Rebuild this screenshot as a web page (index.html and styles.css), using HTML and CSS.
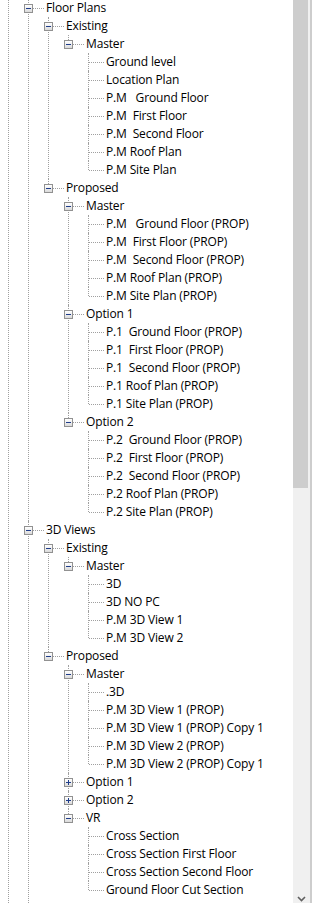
FILE: index.html
```html
<!DOCTYPE html>
<html lang="en">
<head>
  <meta charset="UTF-8">
  <meta name="viewport" content="width=device-width, initial-scale=1.0">
  <title>Project Browser</title>
  <link rel="stylesheet" href="styles.css">
</head>
<body>

  <div class="panel">
    <div class="tree">
      <div class="guide">
        <ul class="root">

          <li>
            <div class="row"><span class="toggle"></span>Floor Plans</div>
            <ul>
              <li>
                <div class="row"><span class="toggle"></span>Existing</div>
                <ul>
                  <li>
                    <div class="row"><span class="toggle"></span>Master</div>
                    <ul>
                      <li><div class="row">Ground level</div></li>
                      <li><div class="row">Location Plan</div></li>
                      <li><div class="row">P.M   Ground Floor</div></li>
                      <li><div class="row">P.M  First Floor</div></li>
                      <li><div class="row">P.M  Second Floor</div></li>
                      <li><div class="row">P.M Roof Plan</div></li>
                      <li><div class="row">P.M Site Plan</div></li>
                    </ul>
                  </li>
                </ul>
              </li>
              <li>
                <div class="row"><span class="toggle"></span>Proposed</div>
                <ul>
                  <li>
                    <div class="row"><span class="toggle"></span>Master</div>
                    <ul>
                      <li><div class="row">P.M   Ground Floor (PROP)</div></li>
                      <li><div class="row">P.M  First Floor (PROP)</div></li>
                      <li><div class="row">P.M  Second Floor (PROP)</div></li>
                      <li><div class="row">P.M Roof Plan (PROP)</div></li>
                      <li><div class="row">P.M Site Plan (PROP)</div></li>
                    </ul>
                  </li>
                  <li>
                    <div class="row"><span class="toggle"></span>Option 1</div>
                    <ul>
                      <li><div class="row">P.1  Ground Floor (PROP)</div></li>
                      <li><div class="row">P.1  First Floor (PROP)</div></li>
                      <li><div class="row">P.1  Second Floor (PROP)</div></li>
                      <li><div class="row">P.1 Roof Plan (PROP)</div></li>
                      <li><div class="row">P.1 Site Plan (PROP)</div></li>
                    </ul>
                  </li>
                  <li>
                    <div class="row"><span class="toggle"></span>Option 2</div>
                    <ul>
                      <li><div class="row">P.2  Ground Floor (PROP)</div></li>
                      <li><div class="row">P.2  First Floor (PROP)</div></li>
                      <li><div class="row">P.2  Second Floor (PROP)</div></li>
                      <li><div class="row">P.2 Roof Plan (PROP)</div></li>
                      <li><div class="row">P.2 Site Plan (PROP)</div></li>
                    </ul>
                  </li>
                </ul>
              </li>
            </ul>
          </li>

          <li>
            <div class="row"><span class="toggle"></span>3D Views</div>
            <ul>
              <li>
                <div class="row"><span class="toggle"></span>Existing</div>
                <ul>
                  <li>
                    <div class="row"><span class="toggle"></span>Master</div>
                    <ul>
                      <li><div class="row">3D</div></li>
                      <li><div class="row">3D NO PC</div></li>
                      <li><div class="row">P.M 3D View 1</div></li>
                      <li><div class="row">P.M 3D View 2</div></li>
                    </ul>
                  </li>
                </ul>
              </li>
              <li>
                <div class="row"><span class="toggle"></span>Proposed</div>
                <ul>
                  <li>
                    <div class="row"><span class="toggle"></span>Master</div>
                    <ul>
                      <li><div class="row">.3D</div></li>
                      <li><div class="row">P.M 3D View 1 (PROP)</div></li>
                      <li><div class="row">P.M 3D View 1 (PROP) Copy 1</div></li>
                      <li><div class="row">P.M 3D View 2 (PROP)</div></li>
                      <li><div class="row">P.M 3D View 2 (PROP) Copy 1</div></li>
                    </ul>
                  </li>
                  <li>
                    <div class="row"><span class="toggle plus"></span>Option 1</div>
                  </li>
                  <li>
                    <div class="row"><span class="toggle plus"></span>Option 2</div>
                  </li>
                  <li>
                    <div class="row"><span class="toggle"></span>VR</div>
                    <ul>
                      <li><div class="row">Cross Section</div></li>
                      <li><div class="row">Cross Section First Floor</div></li>
                      <li><div class="row">Cross Section Second Floor</div></li>
                      <li><div class="row">Ground Floor Cut Section</div></li>
                    </ul>
                  </li>
                </ul>
              </li>
            </ul>
          </li>

        </ul>
      </div>
    </div>

    <div class="scrollbar">
      <div class="thumb"></div>
      <svg class="arrow" width="9" height="6" viewBox="0 0 9 6">
        <path d="M1 1 L4.5 4.5 L8 1" fill="none" stroke="#606060" stroke-width="1.6"/>
      </svg>
    </div>
  </div>

</body>
</html>
```

FILE: styles.css
```css
body {
  margin: 0;
  font-family: 'Open Sans', 'Noto Sans', sans-serif;
  font-size: 12px;
  letter-spacing: -0.15px;
  color: #000;
  background-color: white;
}
.panel {
  display: flex;
  width: 312px;
  height: 903px;
  box-sizing: border-box;
  border-right: 2px solid #cdcdcd;
  overflow: hidden;
}
.tree {
  flex: 1;
  overflow: hidden;
  padding-left: 8px;
}
.guide {
  border-left: 1px dotted #a0a0a0;
  padding-left: 19px;
  margin-top: -1px;
  min-height: 910px;
}
ul {
  list-style: none;
  margin: 0;
  padding: 0;
}
ul ul {
  padding-left: 20px;
}
li {
  position: relative;
}
li::before {
  content: "";
  position: absolute;
  left: 0;
  top: 0;
  bottom: 0;
  border-left: 1px dotted #a0a0a0;
}
li:last-child::before {
  bottom: auto;
  height: 9px;
}
/* top level keeps going past the visible items */
.root > li:last-child::before {
  bottom: -20px;
  height: auto;
}
.row {
  position: relative;
  height: 18px;
  line-height: 18px;
  padding-left: 18px;
  white-space: pre;
}
.row::before {
  content: "";
  position: absolute;
  left: 1px;
  top: 9px;
  width: 15px;
  border-top: 1px dotted #a0a0a0;
}
.toggle {
  position: absolute;
  left: -4px;
  top: 5px;
  width: 9px;
  height: 9px;
  box-sizing: border-box;
  border: 1px solid #919191;
  background: linear-gradient(#ffffff, #dadada);
  z-index: 1;
}
.toggle::before {
  content: "";
  position: absolute;
  left: 1px;
  top: 3px;
  width: 5px;
  height: 1px;
  background-color: #1f3d8a;
}
.plus::after {
  content: "";
  position: absolute;
  left: 3px;
  top: 1px;
  width: 1px;
  height: 5px;
  background-color: #1f3d8a;
}
.scrollbar {
  position: relative;
  width: 17px;
  background-color: #f0f0f0;
}
.thumb {
  width: 15px;
  height: 488px;
  background-color: #cdcdcd;
}
.arrow {
  position: absolute;
  left: 4px;
  bottom: 1px;
}
```
